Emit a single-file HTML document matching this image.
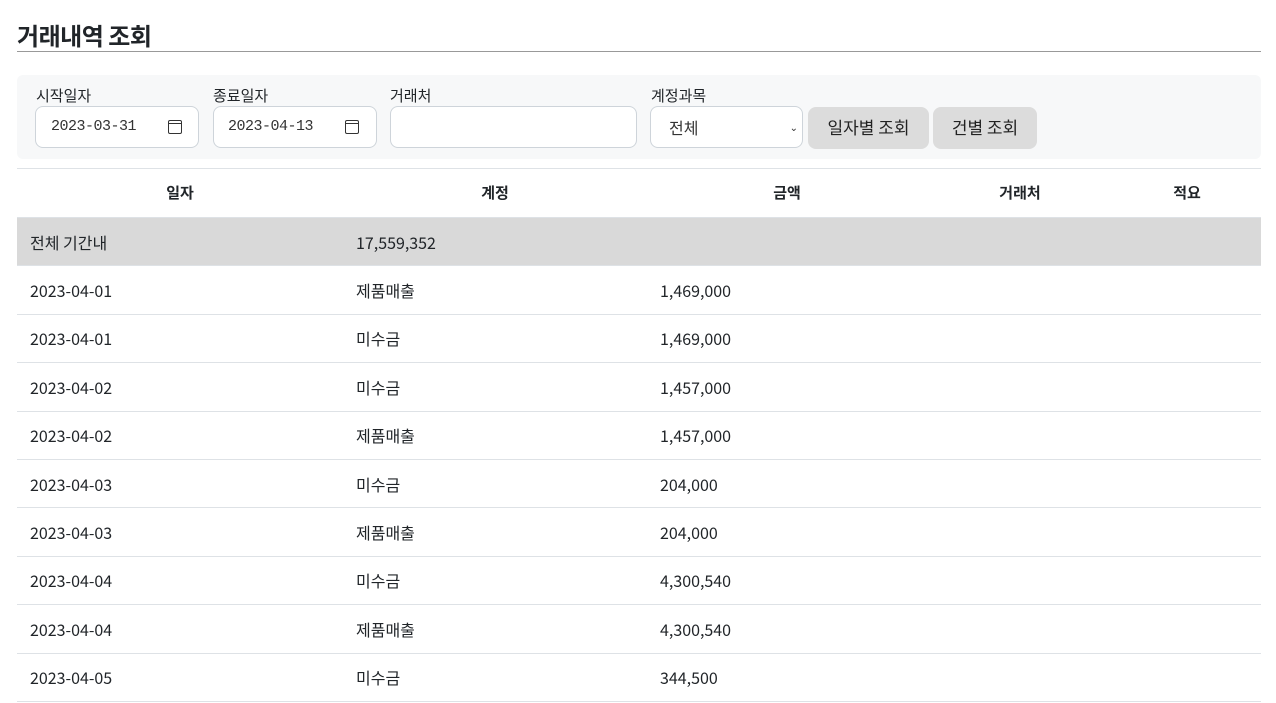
<!DOCTYPE html>
<html><head><meta charset="utf-8"><style>
*{box-sizing:border-box}
body{margin:0;background:#fff;font-family:"Noto Sans CJK KR","Liberation Sans",sans-serif;color:#212529;font-size:16px}
.wrap{position:absolute;left:17px;width:1244px;top:0}
h1{margin:0;position:absolute;top:19px;left:0;font-size:24px;font-weight:bold;letter-spacing:-0.5px;line-height:32px}
.line{position:absolute;top:51px;left:0;width:1244px;height:1px;background:#999}
.panel{position:absolute;top:75px;left:0;width:1244px;height:84px;background:#f7f8f9;border-radius:6px}
.lbl{position:absolute;top:85px;font-size:15px;line-height:22px}
.inp{position:absolute;top:106px;height:42px;background:#fff;border:1px solid #ced4da;border-radius:8px;font-size:16px;line-height:40px;color:#333}
.btn{position:absolute;top:107px;height:42px;background:#dcdcdc;border-radius:8px;font-size:17px;line-height:40px;text-align:center;color:#222}
.cal{position:absolute;top:13px;width:14px;height:14px;border:1.5px solid #333;border-radius:2px}
.cal:before{content:"";position:absolute;left:0;right:0;top:2px;border-top:1.5px solid #333}
table{position:absolute;top:168px;left:0;width:1244px;border-collapse:collapse}
td,th{border-top:1px solid #dee2e6;height:48.4px;padding:0 13px;font-size:16px;line-height:20px;vertical-align:middle}
th{text-align:center;font-weight:bold;font-size:15px;height:49px}
tr.sum td{background:#d9d9d9}
tr:last-child td{border-bottom:1px solid #dee2e6}
</style></head><body><div class="wrap">
<h1>거래내역 조회</h1><div class="line"></div>
<div class="panel"></div>
<div class="lbl" style="left:19px">시작일자</div>
<div class="lbl" style="left:196px">종료일자</div>
<div class="lbl" style="left:373px">거래처</div>
<div class="lbl" style="left:634px">계정과목</div>
<div class="inp" style="left:18px;width:164px;padding-left:15px;font-family:'Liberation Mono','Noto Sans CJK KR',monospace;font-size:15px;letter-spacing:-0.5px">2023-03-31<span class="cal" style="left:132px"></span></div>
<div class="inp" style="left:196px;width:164px;padding-left:14px;font-family:'Liberation Mono','Noto Sans CJK KR',monospace;font-size:15px;letter-spacing:-0.5px">2023-04-13<span class="cal" style="left:131px"></span></div>
<div class="inp" style="left:373px;width:247px"></div>
<div class="inp" style="left:633px;width:153px;padding-left:18px">전체<span style="position:absolute;right:4px;top:0;font-size:10px">&#8964;</span></div>
<div class="btn" style="left:791px;width:121px">일자별 조회</div>
<div class="btn" style="left:916px;width:104px">건별 조회</div>
<table>
<colgroup><col style="width:326px"><col style="width:304px"><col style="width:280px"><col style="width:186px"><col style="width:148px"></colgroup>
<tr><th>일자</th><th>계정</th><th>금액</th><th>거래처</th><th>적요</th></tr>
<tr class="sum"><td>전체 기간내</td><td>17,559,352</td><td></td><td></td><td></td></tr>
<tr><td>2023-04-01</td><td>제품매출</td><td>1,469,000</td><td></td><td></td></tr>
<tr><td>2023-04-01</td><td>미수금</td><td>1,469,000</td><td></td><td></td></tr>
<tr><td>2023-04-02</td><td>미수금</td><td>1,457,000</td><td></td><td></td></tr>
<tr><td>2023-04-02</td><td>제품매출</td><td>1,457,000</td><td></td><td></td></tr>
<tr><td>2023-04-03</td><td>미수금</td><td>204,000</td><td></td><td></td></tr>
<tr><td>2023-04-03</td><td>제품매출</td><td>204,000</td><td></td><td></td></tr>
<tr><td>2023-04-04</td><td>미수금</td><td>4,300,540</td><td></td><td></td></tr>
<tr><td>2023-04-04</td><td>제품매출</td><td>4,300,540</td><td></td><td></td></tr>
<tr><td>2023-04-05</td><td>미수금</td><td>344,500</td><td></td><td></td></tr>
</table>
</div></body></html>
